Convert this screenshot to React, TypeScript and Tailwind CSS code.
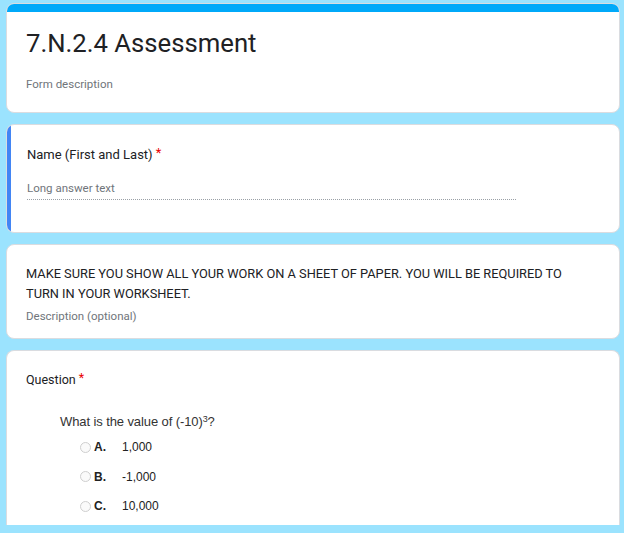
import type { FC } from 'react';

const options = [
  { key: 'A.', value: '1,000' },
  { key: 'B.', value: '-1,000' },
  { key: 'C.', value: '10,000' },
];

const Required: FC = () => (
  <span className="relative -top-[2px] text-[#ea0000]">*</span>
);

const App: FC = () => {
  return (
    <div className="h-[533px] overflow-hidden bg-[#9be3fe] pt-[3px] pl-[6px] pr-[4px] font-['Roboto','Liberation_Sans',sans-serif]">
      <div className="flex flex-col gap-[11px]">
        {/* Title card */}
        <div className="h-[110px] overflow-hidden rounded-[8px] border border-[#dadce0] bg-white">
          <div className="h-[8px] bg-[#00a9f9]" />
          <div className="pl-[19px] pt-[13px]">
            <h1 className="text-[25.7px] leading-[36px] text-[#202124]">7.N.2.4 Assessment</h1>
            <p className="mt-[15px] text-[11.5px] leading-[16px] text-[#70757a]">Form description</p>
          </div>
        </div>

        {/* Name question */}
        <div className="flex h-[109px] overflow-hidden rounded-[8px] border border-[#dadce0] bg-white">
          <div className="w-[4px] shrink-0 bg-[#4285f4]" />
          <div className="flex-1 pl-[16px] pt-[20px]">
            <div className="text-[13px] leading-[20px] text-[#202124]">
              Name (First and Last) <Required />
            </div>
            <div className="mt-[15px] w-[489px] border-b border-dotted border-[#9aa0a6] pb-[3px] text-[11.5px] leading-[16px] text-[#70757a]">
              Long answer text
            </div>
          </div>
        </div>

        {/* Section text */}
        <div className="h-[95px] rounded-[8px] border border-[#dadce0] bg-white pl-[19px] pt-[19px]">
          <p className="text-[12.8px] leading-[20px] text-[#202124]">
            MAKE SURE YOU SHOW ALL YOUR WORK ON A SHEET OF PAPER. YOU WILL BE REQUIRED TO
            <br />
            TURN IN YOUR WORKSHEET.
          </p>
          <p className="mt-[2px] text-[11.5px] leading-[20px] text-[#70757a]">Description (optional)</p>
        </div>

        {/* Question card */}
        <div className="h-[175px] rounded-t-[8px] border border-b-0 border-[#dadce0] bg-white pl-[19px] pt-[19px]">
          <div className="text-[12.5px] leading-[20px] text-[#202124]">
            Question <Required />
          </div>
          <div className="mt-[24px] pl-[34px] font-['Liberation_Sans',Arial,sans-serif] text-[#333333]">
            <div className="text-[13px] leading-[16px] tracking-[-0.1px]">
              What is the value of (-10)<sup className="text-[9px]">3</sup>?
            </div>
            <div className="mt-[9px] flex flex-col gap-[13.5px] pl-[20px]">
              {options.map((o) => (
                <div key={o.key} className="flex h-[16px] items-center text-[12px] text-[#222222]">
                  <span className="mr-[3px] h-[11px] w-[11px] rounded-full border border-[#cfcfcf] bg-[#fafafa]" />
                  <span className="w-[28px] font-bold">{o.key}</span>
                  <span>{o.value}</span>
                </div>
              ))}
            </div>
          </div>
        </div>
      </div>
    </div>
  );
};

export default App;
